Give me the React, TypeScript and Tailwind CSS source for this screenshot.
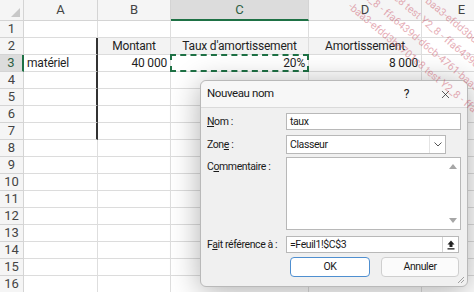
import { X } from "lucide-react";

const COLS = ["A", "B", "C", "D", "E"];
const ROWS = Array.from({ length: 16 }, (_, i) => i + 1);

type Cell = { text?: string; align?: "left" | "right" | "center" };

const DATA: Record<string, Cell> = {
  B2: { text: "Montant", align: "center" },
  C2: { text: "Taux d'amortissement", align: "center" },
  D2: { text: "Amortissement", align: "center" },
  A3: { text: "matériel", align: "left" },
  B3: { text: "40 000", align: "right" },
  C3: { text: "20%", align: "right" },
  D3: { text: "8 000", align: "right" },
};

const WATERMARK_LINES = [
  "-d6cb-4761-baa3-efdd3bd701c8 test Y2_8 - ffa6439d-d6cb",
  "bd701c8 test Y2_8 - ffa6439d-d6cb-4761-baa3-efdd3bd7",
  "Y2_8 - ffa6439d-d6cb-4761-baa3-efdd3bd701c8 test Y2_8",
  "-baa3-efdd3bd701c8 test Y2_8 - ffa6439d-d6cb-4761",
];

function SheetCell({ col, row }: { col: string; row: number }) {
  const key = `${col}${row}`;
  const cell = DATA[key];
  const thick = col === "A" && row >= 2 && row <= 7;
  const shaded = row === 2 && col !== "A" && col !== "E";
  const selected = key === "C3";
  return (
    <div
      className={[
        "relative flex items-center whitespace-nowrap border-b border-[#dcdcdc] px-[3px] text-[12px] tracking-[-0.2px] text-[#1f1f1f]",
        thick ? "border-r-2 border-r-[#333]" : "border-r border-r-[#dedede]",
        shaded ? "bg-[#f3f3f3]" : "bg-white",
        cell?.align === "right" ? "justify-end" : cell?.align === "center" ? "justify-center" : "justify-start",
      ].join(" ")}
    >
      {cell?.text}
      {selected && (
        <div className="absolute inset-x-[-1px] inset-y-[-1px] border-2 border-dashed border-[#1e7145]" />
      )}
    </div>
  );
}

function Label({ before, u, rest }: { before?: string; u: string; rest: string }) {
  return (
    <span className="whitespace-nowrap text-[10.5px] tracking-[-0.4px] text-[#1a1a1a]">
      {before}
      <span className="underline underline-offset-1">{u}</span>
      {rest}
    </span>
  );
}

export default function App() {
  return (
    <div className="relative h-[292px] w-[474px] overflow-hidden bg-white font-['Roboto',sans-serif]">
      <div className="grid grid-cols-[24px_74px_73px_138px_113px_80px] grid-rows-[21px_repeat(16,17px)]">
        {/* corner */}
        <div className="relative border-b border-r border-[#d4d4d4] bg-[#f5f5f5]">
          <div className="absolute bottom-[3px] right-[3px] h-0 w-0 border-b-[9px] border-l-[9px] border-b-[#c8c8c8] border-l-transparent" />
        </div>
        {COLS.map((c) => (
          <div
            key={c}
            className={[
              "flex items-center justify-center border-r border-[#d4d4d4] text-[13px]",
              c === "C"
                ? "border-b-2 border-b-[#1e7145] bg-[#dcdcdc] text-[#2f5f43]"
                : "border-b border-b-[#d4d4d4] bg-[#f5f5f5] text-[#444]",
            ].join(" ")}
          >
            {c}
          </div>
        ))}
        {ROWS.map((r) => (
          <div key={r} className="contents">
            <div
              className={[
                "flex items-center justify-center border-b border-[#d4d4d4] text-[13px]",
                r === 3
                  ? "border-r-2 border-r-[#1e7145] bg-[#dcdcdc] text-[#2f5f43]"
                  : "border-r border-r-[#d4d4d4] bg-[#f5f5f5] text-[#444]",
              ].join(" ")}
            >
              {r}
            </div>
            {COLS.map((c) => (
              <SheetCell key={c} col={c} row={r} />
            ))}
          </div>
        ))}
      </div>

      {/* dialog */}
      <div className="absolute left-[200px] top-[80px] flex h-[207px] w-[268px] flex-col rounded-[6px] border border-[#b9b9b9] bg-[#f0f0f0] shadow-[0_4px_30px_rgba(0,0,0,0.32)]">
        <div className="flex h-[27px] items-center rounded-t-[6px] border-b border-[#dadada] bg-[#f7f7f7] pl-[6px] pr-[15px] text-[11.5px] tracking-[-0.4px] text-[#1a1a1a]">
          <span>Nouveau nom</span>
          <span className="ml-auto mr-[30px] text-[12px]">?</span>
          <X size={13} strokeWidth={1.3} />
        </div>
        <div className="flex flex-col pl-[6px] pt-[5px] text-[10.5px] tracking-[-0.4px] text-[#1a1a1a]">
          <div className="flex h-[17px] items-center">
            <div className="w-[79px]">
              <Label u="N" rest="om :" />
            </div>
            <div className="flex h-[17px] w-[175px] items-center border border-[#b8b8b8] bg-white px-[3px]">
              taux
            </div>
          </div>
          <div className="mt-[5px] flex h-[19px] items-center">
            <div className="w-[79px]">
              <Label before="Zon" u="e" rest=" :" />
            </div>
            <div className="flex h-[19px] w-[160px] items-center border border-[#b8b8b8] bg-white">
              <span className="flex-1 px-[3px]">Classeur</span>
              <div className="flex h-full w-[16px] items-center justify-center border-l border-[#e4e4e4]">
                <svg width="8" height="5" viewBox="0 0 8 5">
                  <path d="M0.5 0.5 L4 4 L7.5 0.5" fill="none" stroke="#555" strokeWidth="1" />
                </svg>
              </div>
            </div>
          </div>
          <div className="mt-[3px] flex h-[73px] items-start">
            <div className="w-[79px] pt-[2px]">
              <Label before="C" u="o" rest="mmentaire :" />
            </div>
            <div className="flex h-[73px] w-[175px] justify-end border border-[#b8b8b8] bg-white">
              <div className="flex w-[15px] flex-col items-center justify-between py-[6px]">
                <svg width="8" height="5" viewBox="0 0 8 5">
                  <path d="M0 5 L4 0 L8 5 Z" fill="#a6a6a6" />
                </svg>
                <svg width="8" height="5" viewBox="0 0 8 5">
                  <path d="M0 0 L4 5 L8 0 Z" fill="#a6a6a6" />
                </svg>
              </div>
            </div>
          </div>
          <div className="mt-[6px] flex h-[17px] items-center">
            <div className="w-[79px]">
              <Label before="F" u="a" rest="it référence à :" />
            </div>
            <div className="flex h-[17px] w-[173px] items-center border border-[#b8b8b8] bg-white">
              <span className="flex-1 px-[3px]">=Feuil1!$C$3</span>
              <div className="flex h-full w-[16px] items-center justify-center border-l border-[#d4d4d4]">
                <svg width="8" height="10" viewBox="0 0 8 10">
                  <path d="M4 0.5 L0.5 4.5 H2.5 V7 H5.5 V4.5 H7.5 Z" fill="#222" />
                  <rect x="0.5" y="8.2" width="7" height="1.3" fill="#222" />
                </svg>
              </div>
            </div>
          </div>
          <div className="mt-[4px] flex h-[20px] pl-[83px]">
            <button
              type="button"
              className="flex h-[20px] w-[80px] items-center justify-center rounded-[4px] border-[1.5px] border-[#4f8fd0] bg-white"
            >
              OK
            </button>
            <button
              type="button"
              className="ml-[11px] flex h-[20px] w-[78px] items-center justify-center rounded-[4px] border border-[#cfcfcf] bg-[#fbfbfb]"
            >
              Annuler
            </button>
          </div>
        </div>
        <svg className="absolute bottom-[2px] right-[2px]" width="9" height="9" viewBox="0 0 9 9">
          <path d="M8 2 L2 8 M8 5 L5 8" stroke="#a0a0a0" strokeWidth="1" />
        </svg>
      </div>

      {/* watermark */}
      <div className="pointer-events-none absolute left-[390px] top-[-43px] origin-top-left rotate-[40deg] text-[10.5px] leading-[18px] text-[#c84a5e] opacity-45">
        {WATERMARK_LINES.map((line, i) => (
          <div key={i} className="whitespace-nowrap">
            {line}
          </div>
        ))}
      </div>
    </div>
  );
}
